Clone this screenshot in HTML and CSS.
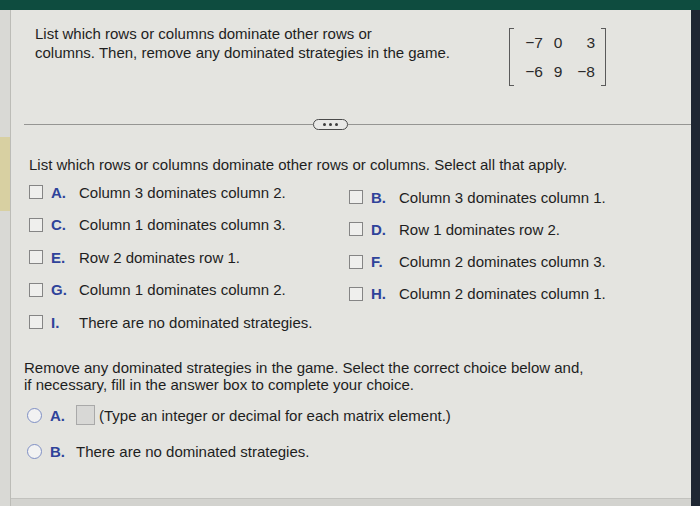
FILE: index.html
```html
<!DOCTYPE html>
<html lang="en">
<head>
<meta charset="utf-8">
<title>Dominated strategies</title>
<link rel="stylesheet" href="styles.css">
</head>
<body>
<div class="topbar"></div>
<div class="frame">
  <div class="side"><div class="side-mark"></div></div>
  <main class="content">
    <section class="question">
      <p class="prompt">List which rows or columns dominate other rows or<br>columns. Then, remove any dominated strategies in the game.</p>
      <div class="matrix">
        <div class="bracket left"></div>
        <div class="cells">
          <span class="c1">−7</span><span class="c2">0</span><span class="c3">3</span>
          <span class="c1">−6</span><span class="c2">9</span><span class="c3">−8</span>
        </div>
        <div class="bracket right"></div>
      </div>
    </section>

    <div class="sep">
      <div class="sep-line first"></div>
      <div class="pill"><span class="dot"></span><span class="dot"></span><span class="dot"></span></div>
      <div class="sep-line"></div>
    </div>

    <section class="part1">
      <p class="lead">List which rows or columns dominate other rows or columns. Select all that apply.</p>
      <div class="options">
        <div class="col col-left">
          <div class="opt"><span class="box"></span><span class="key">A.</span><span>Column 3 dominates column 2.</span></div>
          <div class="opt"><span class="box"></span><span class="key">C.</span><span>Column 1 dominates column 3.</span></div>
          <div class="opt"><span class="box"></span><span class="key">E.</span><span>Row 2 dominates row 1.</span></div>
          <div class="opt"><span class="box"></span><span class="key">G.</span><span>Column 1 dominates column 2.</span></div>
          <div class="opt"><span class="box"></span><span class="key">I.</span><span>There are no dominated strategies.</span></div>
        </div>
        <div class="col col-right">
          <div class="opt"><span class="box"></span><span class="key">B.</span><span>Column 3 dominates column 1.</span></div>
          <div class="opt"><span class="box"></span><span class="key">D.</span><span>Row 1 dominates row 2.</span></div>
          <div class="opt"><span class="box"></span><span class="key">F.</span><span>Column 2 dominates column 3.</span></div>
          <div class="opt"><span class="box"></span><span class="key">H.</span><span>Column 2 dominates column 1.</span></div>
        </div>
      </div>
    </section>

    <section class="part2">
      <p class="lead">Remove any dominated strategies in the game. Select the correct choice below and,<br>if necessary, fill in the answer box to complete your choice.</p>
      <div class="radios">
        <div class="ropt"><span class="radio"></span><span class="key">A.</span><span class="answer-box"></span><span>(Type an integer or decimal for each matrix element.)</span></div>
        <div class="ropt"><span class="radio"></span><span class="key">B.</span><span>There are no dominated strategies.</span></div>
      </div>
    </section>

    <div class="foot"></div>
  </main>
  <div class="edge"></div>
</div>
</body>
</html>
```

FILE: styles.css
```css
* { box-sizing: border-box; }

html, body {
  margin: 0;
  padding: 0;
}

body {
  width: 700px;
  height: 506px;
  overflow: hidden;
  background: #1e2633;
  font-family: "Liberation Sans", Arial, sans-serif;
  font-size: 15px;
  color: #1e1e1e;
}

.topbar {
  height: 10px;
  background: #0e4c3f;
}

.frame {
  display: flex;
  height: 496px;
}

.side {
  width: 11px;
  flex: none;
  background: #d9d9d5;
  border-right: 1px solid #bcbcb7;
  padding-top: 127px;
}

.side-mark {
  height: 74px;
  background: #d8d0a2;
}

.content {
  flex: 1;
  display: flex;
  flex-direction: column;
  background: #e4e4e0;
  padding-top: 14px;
}

.edge {
  width: 9px;
  flex: none;
  background: #1f2733;
}

/* question header */
.question {
  display: flex;
  padding-left: 24px;
}

.prompt {
  width: 474px;
  flex: none;
  margin: 0;
  line-height: 19px;
  white-space: nowrap;
}

.matrix {
  display: flex;
  margin-top: 4px;
  color: #2a2a2a;
}

.bracket {
  width: 5px;
  border: 1.5px solid #5a5a5a;
}

.bracket.left { border-right: none; }
.bracket.right { border-left: none; }

.cells {
  display: grid;
  grid-template-columns: 29px 30px 22px;
  row-gap: 12px;
  padding: 6px 6px 6px 0;
  line-height: 17px;
  font-size: 15.5px;
}

.c1 { text-align: right; }
.c2 { text-align: center; }
.c3 { text-align: right; }

/* separator */
.sep {
  display: flex;
  align-items: center;
  margin: 33px 0 0 13px;
}

.sep-line {
  flex: 1;
  height: 1.5px;
  background: #959593;
}

.sep-line.first { flex: 0 0 289px; }

.pill {
  width: 35px;
  height: 11px;
  flex: none;
  border: 1.5px solid #4a4a4a;
  border-radius: 6px;
  background: #e9e9e7;
  display: flex;
  align-items: center;
  justify-content: center;
  gap: 3px;
}

.dot {
  width: 3px;
  height: 3px;
  border-radius: 50%;
  background: #3e3e3e;
}

/* part 1 */
.part1 {
  padding-left: 18px;
  margin-top: 26px;
}

.lead {
  margin: 0;
  line-height: 18px;
  white-space: nowrap;
}

.options {
  display: flex;
  margin-top: 9px;
}

.col {
  display: flex;
  flex-direction: column;
  gap: 14.5px;
}

.col-left { width: 320px; }

.col-right {
  padding-top: 5px;
  gap: 14.3px;
}

.opt {
  display: flex;
  align-items: center;
  height: 18px;
}

.box {
  width: 14px;
  height: 14px;
  flex: none;
  border: 1.5px solid #858585;
  background: #efefed;
  margin-right: 8px;
}

.key {
  width: 28px;
  flex: none;
  font-weight: bold;
  color: #2f439a;
}

/* part 2 */
.part2 {
  padding-left: 13px;
  margin-top: 28px;
}

.part2 .lead { line-height: 17px; }

.radios {
  display: flex;
  flex-direction: column;
  gap: 14px;
  margin-top: 11px;
}

.ropt {
  display: flex;
  align-items: center;
  height: 22px;
}

.radio {
  width: 15px;
  height: 15px;
  flex: none;
  border-radius: 50%;
  border: 1.5px solid #7f8fc4;
  background: #f2f2f2;
  margin: 0 8px 0 3px;
}

.ropt .key { width: 26px; }

.answer-box {
  width: 19px;
  height: 20px;
  flex: none;
  border: 1px solid #a9a9a9;
  background: #d8d8d6;
  margin-right: 4px;
}

.foot {
  margin-top: auto;
  height: 8px;
  background: #d3d3cf;
  border-top: 1px solid #c2c2be;
}
```
